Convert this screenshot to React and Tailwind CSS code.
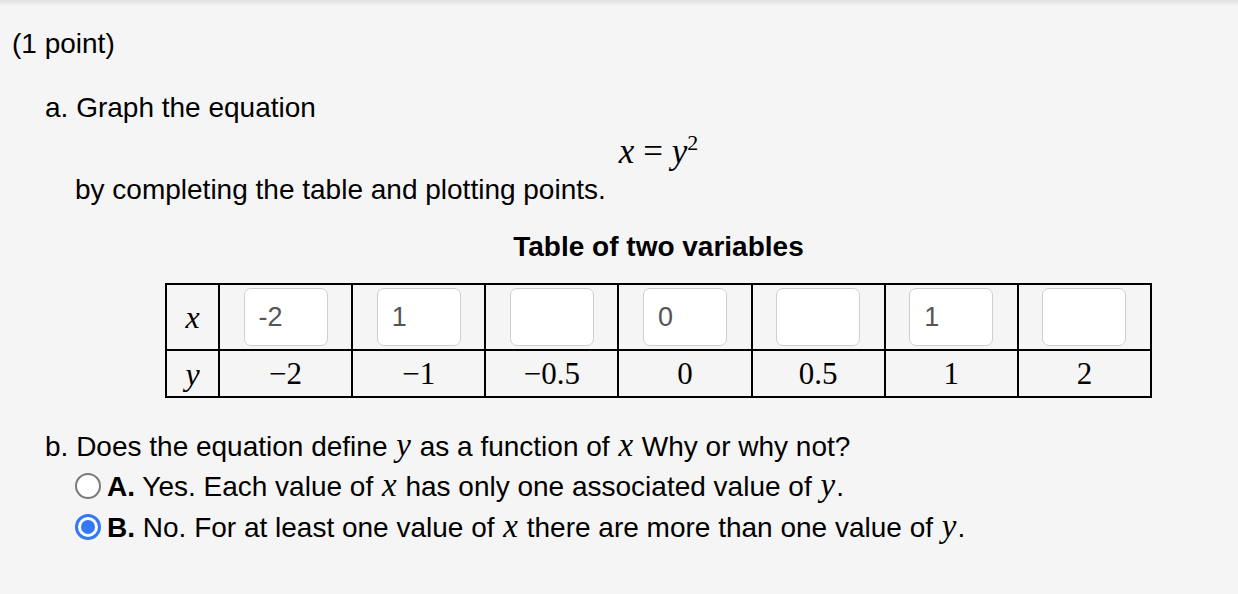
import React from 'react';

const sans = { fontFamily: '"Liberation Sans", Arial, sans-serif' };

const xs = ['-2', '1', '', '0', '', '1', ''];
const ys = ['\u22122', '\u22121', '\u22120.5', '0', '0.5', '1', '2'];

function M({ children }) {
  return <span className="font-['Liberation_Serif',serif] italic text-[33px] leading-[32px] px-[1px]">{children}</span>;
}

function Radio({ checked }) {
  if (checked) {
    return (
      <span className="inline-flex items-center justify-center w-[26px] h-[26px] rounded-full border-[3px] border-[#3478f6] bg-white">
        <span className="w-[14px] h-[14px] rounded-full bg-[#3478f6]" />
      </span>
    );
  }
  return <span className="inline-block w-[26px] h-[26px] rounded-full border-2 border-[#7a7a7a] bg-white" />;
}

export default function App() {
  return (
    <div className="w-[1238px] h-[594px] overflow-hidden bg-[#f5f5f5] text-black text-[28px] leading-[32px]" style={sans}>
      <div className="h-[6px] bg-gradient-to-b from-[#e0e0e0] to-[#f5f5f5]" />

      <div className="mt-[22px] pl-[12px]">(1 point)</div>

      <div className="mt-[32px] pl-[45px]">a. Graph the equation</div>

      <div className="w-[1167px] ml-[75px]">
        <div className="mt-[12px] text-center font-['Liberation_Serif',serif] italic text-[35px] leading-[32px]">
          x<span className="not-italic"> = </span>y<sup className="not-italic text-[22px] top-[-0.6em]">2</sup>
        </div>
      </div>

      <div className="mt-[6px] pl-[75px]">by completing the table and plotting points.</div>

      <div className="w-[1167px] ml-[75px]">
        <div className="mt-[25px] text-center font-bold">Table of two variables</div>

        <table className="mt-[20px] mx-auto border-collapse table-fixed w-[987px]">
          <colgroup>
            <col className="w-[53px]" />
            {ys.map((_, i) => (
              <col key={i} />
            ))}
          </colgroup>
          <tbody>
            <tr className="h-[66px]">
              <td className="border-2 border-black text-center font-['Liberation_Serif',serif] italic text-[32px]">x</td>
              {xs.map((v, i) => (
                <td key={i} className="border-2 border-black">
                  <div className="mx-auto w-[84px] h-[58px] rounded-[7px] border-[1.5px] border-[#cfcfcf] bg-white flex items-center pl-[14px] text-[27px] text-[#555]">
                    {v}
                  </div>
                </td>
              ))}
            </tr>
            <tr className="h-[47px]">
              <td className="border-2 border-black text-center font-['Liberation_Serif',serif] italic text-[32px]">y</td>
              {ys.map((v, i) => (
                <td key={i} className="border-2 border-black text-center font-['Liberation_Serif',serif] text-[31px]">
                  {v}
                </td>
              ))}
            </tr>
          </tbody>
        </table>
      </div>

      <div className="mt-[31px] pl-[45px]">
        b. Does the equation define <M>y</M> as a function of <M>x</M> Why or why not?
      </div>

      <div className="mt-[6px] pl-[75px] flex items-center gap-[6px]">
        <Radio />
        <span>
          <b>A.</b> Yes. Each value of <M>x</M> has only one associated value of <M>y</M>.
        </span>
      </div>

      <div className="mt-[7px] pl-[75px] flex items-center gap-[6px]">
        <Radio checked />
        <span>
          <b>B.</b> No. For at least one value of <M>x</M> there are more than one value of <M>y</M>.
        </span>
      </div>
    </div>
  );
}
